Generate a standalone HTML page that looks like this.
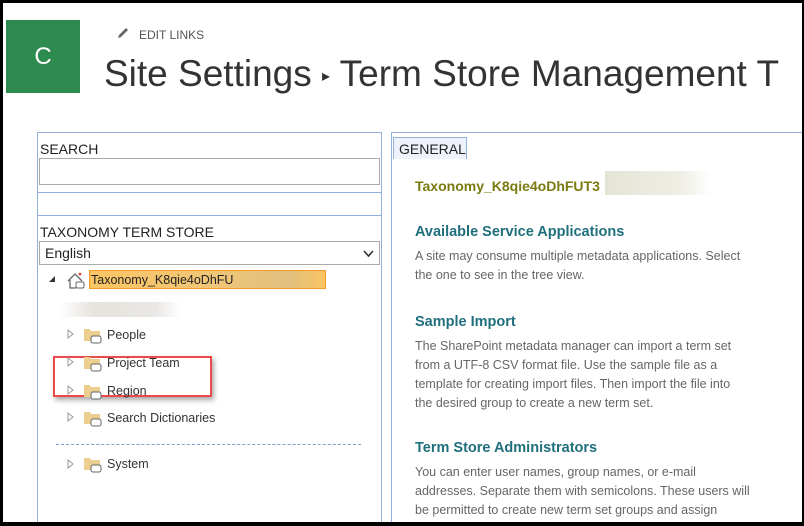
<!DOCTYPE html>
<html><head><meta charset="utf-8"><style>
*{margin:0;padding:0;box-sizing:border-box}
body{width:804px;height:526px;overflow:hidden;background:#000;font-family:"Liberation Sans",sans-serif;position:relative}
#pg{position:absolute;left:3px;top:3px;width:799px;height:519px;background:#fff;overflow:hidden}
.a{position:absolute;white-space:nowrap}
.t{font-size:12.5px;color:#333}
.h{font-weight:bold;color:#1f6f7d;font-size:14.5px}
.p{color:#666;font-size:12.5px;line-height:19px;white-space:normal}
</style></head><body><div id="pg">
<div class="a" style="left:3px;top:17px;width:74px;height:73px;background:#2e8b4f;color:#fff;font-size:24px;line-height:73px;text-align:center">C</div>
<svg class="a" style="left:113px;top:23px" width="14" height="14" viewBox="0 0 14 14"><path d="M2 12 L3 9 L10 2 L12 4 L5 11 Z" fill="#666"/></svg>
<div class="a" style="left:136px;top:25px;font-size:12px;color:#555">EDIT LINKS</div>
<div class="a" style="left:101px;top:50px;font-size:37px;color:#333;letter-spacing:0px;font-weight:300">Site Settings <span style="font-size:16px;vertical-align:middle">&#9656;</span> Term Store Management T</div>

<div class="a" style="left:34px;top:129px;width:345px;height:400px;border:1px solid #92b0dc"></div>
<div class="a" style="left:34px;top:189px;width:345px;height:1px;background:#92b0dc"></div>
<div class="a" style="left:34px;top:212px;width:345px;height:1px;background:#92b0dc"></div>
<div class="a" style="left:37px;top:138px;font-size:14px;color:#222">SEARCH</div>
<div class="a" style="left:36px;top:155px;width:341px;height:27px;border:1px solid #aaa"></div>
<div class="a" style="left:37px;top:221px;font-size:14px;color:#222">TAXONOMY TERM STORE</div>
<div class="a" style="left:36px;top:238px;width:341px;height:24px;border:1px solid #aaa;font-size:14px;color:#222;padding:3px 0 0 5px">English</div>
<svg class="a" style="left:360px;top:247px" width="11" height="8" viewBox="0 0 11 8"><path d="M1 1 L5.5 6 L10 1" fill="none" stroke="#333" stroke-width="1.6"/></svg>

<svg class="a" style="left:46px;top:273px" width="7" height="7"><path d="M6 0 L6 6 L0 6 Z" fill="#333"/></svg>
<svg class="a" style="left:63px;top:268px" width="20" height="20" viewBox="0 0 20 20"><path d="M2 10 L9 3 L16 10 M4 9 L4 17 L10 17" fill="none" stroke="#666" stroke-width="1.3"/><rect x="10" y="11" width="8" height="6" rx="1.5" fill="#fff" stroke="#666"/><circle cx="14" cy="3" r="1.3" fill="#d33"/></svg>
<div class="a" style="left:86px;top:267px;width:237px;height:19px;background:linear-gradient(90deg,#fbc564,#f1c678 50%,#e2c07e 85%,#fbc564);border:1px solid #f39a2a;font-size:12.5px;color:#222;padding:2px 0 0 1px">Taxonomy_K8qie4oDhFU</div>
<div class="a" style="left:56px;top:299px;width:122px;height:15px;background:linear-gradient(90deg,#fff,#e6e2dc 30%,#eae8e6 80%,#fff)"></div>

<div class="a" style="left:50px;top:353px;width:159px;height:41px;border:2px solid #ea4a4a;box-shadow:2px 3px 5px rgba(0,0,0,.35)"></div>
<div class="a" style="left:53px;top:441px;width:305px;border-top:1px dashed #7ca0d6"></div>

<div class="a" style="left:388px;top:129px;width:420px;height:400px;border:1px solid #92b0dc"></div>
<div class="a" style="left:390px;top:134px;width:74px;height:22px;background:#eef3fb;border:1px solid #92b0dc;border-bottom:none;font-size:14px;color:#222;padding:3px 0 0 5px">GENERAL</div>
<div class="a" style="left:412px;top:175px;font-weight:bold;color:#7b7a10;font-size:14px">Taxonomy_K8qie4oDhFUT3</div>
<div class="a" style="left:602px;top:168px;width:106px;height:24px;background:linear-gradient(90deg,#e4e4d6,#eeeee4 70%,#fff)"></div>
<div class="a h" style="left:412px;top:221px">Available Service Applications</div>
<div class="a p" style="left:412px;top:244px;width:380px">A site may consume multiple metadata applications. Select<br>the one to see in the tree view.</div>
<div class="a h" style="left:412px;top:311px">Sample Import</div>
<div class="a p" style="left:412px;top:334px;width:380px">The SharePoint metadata manager can import a term set<br>from a UTF-8 CSV format file. Use the sample file as a<br>template for creating import files. Then import the file into<br>the desired group to create a new term set.</div>
<div class="a h" style="left:412px;top:437px">Term Store Administrators</div>
<div class="a p" style="left:412px;top:460px;width:390px">You can enter user names, group names, or e-mail<br>addresses. Separate them with semicolons. These users will<br>be permitted to create new term set groups and assign</div>

<svg class="a" style="left:64px;top:326px" width="8" height="10"><path d="M1 1 L6 5 L1 9 Z" fill="none" stroke="#999"/></svg>
<svg class="a" style="left:80px;top:323px" width="20" height="18" viewBox="0 0 20 18"><path d="M1 3 L7 3 L8 5 L17 5 L17 15 L1 15 Z" fill="#eccf8f"/><rect x="8" y="10" width="10" height="7" rx="2" fill="#fff" stroke="#666"/></svg>
<div class="a t" style="left:104px;top:325px">People</div>
<svg class="a" style="left:64px;top:354px" width="8" height="10"><path d="M1 1 L6 5 L1 9 Z" fill="none" stroke="#999"/></svg>
<svg class="a" style="left:80px;top:351px" width="20" height="18" viewBox="0 0 20 18"><path d="M1 3 L7 3 L8 5 L17 5 L17 15 L1 15 Z" fill="#eccf8f"/><rect x="8" y="10" width="10" height="7" rx="2" fill="#fff" stroke="#666"/></svg>
<div class="a t" style="left:104px;top:353px">Project Team</div>
<svg class="a" style="left:64px;top:382px" width="8" height="10"><path d="M1 1 L6 5 L1 9 Z" fill="none" stroke="#999"/></svg>
<svg class="a" style="left:80px;top:379px" width="20" height="18" viewBox="0 0 20 18"><path d="M1 3 L7 3 L8 5 L17 5 L17 15 L1 15 Z" fill="#eccf8f"/><rect x="8" y="10" width="10" height="7" rx="2" fill="#fff" stroke="#666"/></svg>
<div class="a t" style="left:104px;top:381px">Region</div>
<svg class="a" style="left:64px;top:409px" width="8" height="10"><path d="M1 1 L6 5 L1 9 Z" fill="none" stroke="#999"/></svg>
<svg class="a" style="left:80px;top:406px" width="20" height="18" viewBox="0 0 20 18"><path d="M1 3 L7 3 L8 5 L17 5 L17 15 L1 15 Z" fill="#eccf8f"/><rect x="8" y="10" width="10" height="7" rx="2" fill="#fff" stroke="#666"/></svg>
<div class="a t" style="left:104px;top:408px">Search Dictionaries</div>
<svg class="a" style="left:64px;top:456px" width="8" height="10"><path d="M1 1 L6 5 L1 9 Z" fill="none" stroke="#999"/></svg>
<svg class="a" style="left:80px;top:452px" width="20" height="18" viewBox="0 0 20 18"><path d="M1 3 L7 3 L8 5 L17 5 L17 15 L1 15 Z" fill="#eccf8f"/><rect x="8" y="10" width="10" height="7" rx="2" fill="#fff" stroke="#666"/></svg>
<div class="a t" style="left:104px;top:454px">System</div>
</div></body></html>
